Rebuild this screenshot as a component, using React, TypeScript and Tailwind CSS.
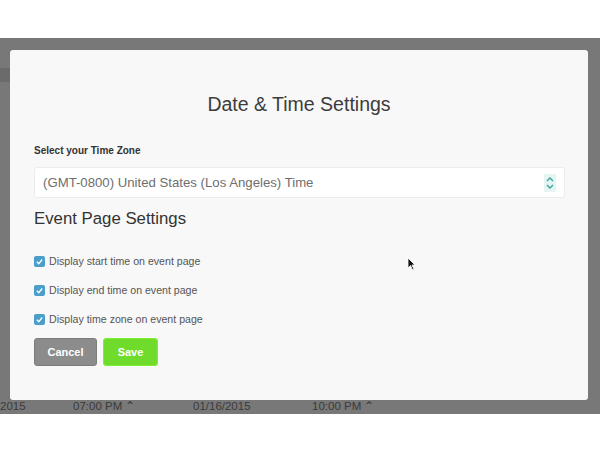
import React from "react";

function Check() {
  return (
    <span className="w-[11px] h-[11px] rounded-[2px] bg-[#4a9ec9] flex items-center justify-center shrink-0">
      <svg width="9" height="9" viewBox="0 0 10 10">
        <path d="M2 5.2 L4.2 7.4 L8 2.8" stroke="#fff" strokeWidth="1.5" fill="none" />
      </svg>
    </span>
  );
}

export default function App() {
  const items = [
    "Display start time on event page",
    "Display end time on event page",
    "Display time zone on event page",
  ];
  return (
    <div className="w-[600px] h-[450px] bg-white relative overflow-hidden" style={{ fontFamily: "Helvetica, 'Liberation Sans', Arial, sans-serif" }}>
      <div className="h-[38px]" />
      <div className="h-[376px] bg-[#787878] relative">
        {/* background content peeking */}
        <div className="absolute left-0 bottom-0 w-full h-[14px] flex items-center text-[11.5px] text-[#3a3a3a]">
          <span className="w-[73px]">2015</span>
          <span className="w-[120px]">07:00 PM ⌃</span>
          <span className="w-[119px]">01/16/2015</span>
          <span>10:00 PM ⌃</span>
        </div>
        <div className="absolute left-0 top-[30px] w-[10px] h-[14px] bg-[#6b6b6b]" />
        <div className="absolute left-[10px] top-[12px] w-[578px] h-[350px] bg-[#f8f8f8] rounded-[3px] px-[24px]">
          <div className="pt-[41px] text-center text-[19.5px] text-[#3c3c3c] leading-[26px]">Date &amp; Time Settings</div>
          <div className="mt-[27px] text-[10px] font-semibold text-[#333] leading-[14px]">Select your Time Zone</div>
          <div className="mt-[9px] h-[31px] w-[531px] bg-white border border-[#ececec] rounded-[3px] flex items-center justify-between pl-[8px] pr-[8px]">
            <span className="text-[13.2px] text-[#6e6e6e]">(GMT-0800) United States (Los Angeles) Time</span>
            <span className="w-[12px] h-[18px] bg-[#e4f5f2] flex items-center justify-center">
              <svg width="10" height="16" viewBox="0 0 10 16">
                <path d="M2 6 L5 3 L8 6" stroke="#3aa59a" strokeWidth="1.4" fill="none" />
                <path d="M2 10 L5 13 L8 10" stroke="#3aa59a" strokeWidth="1.4" fill="none" />
              </svg>
            </span>
          </div>
          <div className="mt-[10px] text-[16.8px] text-[#333] leading-[22px]">Event Page Settings</div>
          <div className="mt-[26px] flex flex-col gap-[18px]">
            {items.map((t) => (
              <div key={t} className="flex items-center gap-[4px] h-[11px]">
                <Check />
                <span className="text-[10.6px] text-[#555]">{t}</span>
              </div>
            ))}
          </div>
          <div className="mt-[13px] flex gap-[6px]">
            <div className="w-[63px] h-[28px] rounded-[3px] bg-[#8c8c8c] border border-[#7d7d7d] text-white text-[11px] font-semibold flex items-center justify-center">Cancel</div>
            <div className="w-[55px] h-[28px] rounded-[3px] bg-[#6fdc2c] border border-[#7cf02f] text-white text-[11px] font-semibold flex items-center justify-center">Save</div>
          </div>
        </div>
        <svg className="absolute left-[407px] top-[219px]" width="9" height="14" viewBox="0 0 9 14">
          <path d="M1 1 L1 11 L3.5 8.5 L5.5 13 L7 12.3 L5 8 L8 8 Z" fill="#111" stroke="#fff" strokeWidth="0.8" />
        </svg>
      </div>
    </div>
  );
}
